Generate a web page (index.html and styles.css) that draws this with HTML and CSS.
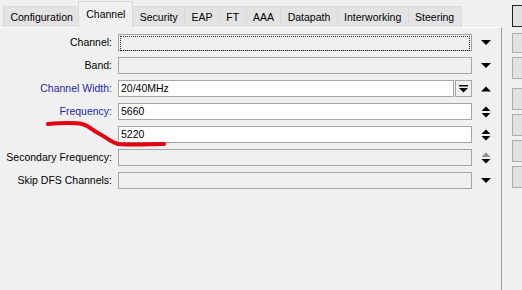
FILE: index.html
```html
<!DOCTYPE html>
<html>
<head>
<meta charset="utf-8">
<link rel="stylesheet" href="styles.css">
</head>
<body>
<div class="window">
  <div class="main">
    <div class="tabs">
      <div class="tab">Configuration</div>
      <div class="tab active">Channel</div>
      <div class="tab">Security</div>
      <div class="tab">EAP</div>
      <div class="tab">FT</div>
      <div class="tab">AAA</div>
      <div class="tab">Datapath</div>
      <div class="tab">Interworking</div>
      <div class="tab">Steering</div>
    </div>
    <div class="panel">
      <div class="form">
        <div class="label">Channel:</div>
        <div class="field disabled focus"><span class="dots"></span></div>
        <div class="icon"><svg width="10" height="6" viewBox="0 0 10 6"><path d="M0 0H10L5 5Z" fill="#000"/></svg></div>

        <div class="label">Band:</div>
        <div class="field disabled"></div>
        <div class="icon"><svg width="10" height="6" viewBox="0 0 10 6"><path d="M0 0H10L5 5Z" fill="#000"/></svg></div>

        <div class="label blue">Channel Width:</div>
        <div class="combo">
          <div class="field">20/40MHz</div>
          <div class="dropbtn"><svg width="9" height="8" viewBox="0 0 9 8"><rect x="0" y="0" width="9" height="1.5" fill="#000"/><path d="M0 3H9L4.5 7.5Z" fill="#000"/></svg></div>
        </div>
        <div class="icon"><svg width="10" height="6" viewBox="0 0 10 6"><path d="M0 5.5H10L5 0.5Z" fill="#000"/></svg></div>

        <div class="label blue">Frequency:</div>
        <div class="field">5660</div>
        <div class="icon"><svg width="10" height="12" viewBox="0 0 10 12"><path d="M0.5 5H9.5L5 0.5Z" fill="#000"/><path d="M0.5 7H9.5L5 11.5Z" fill="#000"/></svg></div>

        <div class="label"></div>
        <div class="field">5220</div>
        <div class="icon"><svg width="10" height="12" viewBox="0 0 10 12"><path d="M0.5 5H9.5L5 0.5Z" fill="#000"/><path d="M0.5 7H9.5L5 11.5Z" fill="#000"/></svg></div>

        <div class="label">Secondary Frequency:</div>
        <div class="field disabled"></div>
        <div class="icon"><svg width="10" height="12" viewBox="0 0 10 12"><path d="M0.5 5H9.5L5 0.5Z" fill="#8c8c8c"/><path d="M0.5 7H9.5L5 11.5Z" fill="#000"/></svg></div>

        <div class="label">Skip DFS Channels:</div>
        <div class="field disabled"></div>
        <div class="icon"><svg width="10" height="6" viewBox="0 0 10 6"><path d="M0 0H10L5 5Z" fill="#000"/></svg></div>
      </div>
      <svg class="scribble" width="180" height="40" viewBox="0 0 180 40"><path d="M48 13 C60 12 72 11 82 13 C90 15 92 19 98 22 C106 26 110 31 118 33 C130 34 150 33 164 33" fill="none" stroke="#e4000f" stroke-width="4" stroke-linecap="round" stroke-linejoin="round"/></svg>
    </div>
  </div>
  <div class="buttons">
    <div class="btn default"></div>
    <div class="btn b1"></div>
    <div class="btn b2"></div>
    <div class="btn"></div>
    <div class="btn"></div>
    <div class="btn"></div>
    <div class="btn"></div>
  </div>
</div>
</body>
</html>
```

FILE: styles.css
```css
html, body {
  margin: 0;
  padding: 0;
  background: #f0f0f0;
}
body {
  width: 522px;
  height: 290px;
  overflow: hidden;
  font-family: "Liberation Sans", Arial, sans-serif;
  font-size: 10.5px;
  color: #000;
}
.window {
  display: flex;
  height: 290px;
}
.main {
  width: 502px;
  flex: none;
  display: flex;
  flex-direction: column;
}
.tabs {
  display: flex;
  align-items: flex-end;
  height: 27px;
  padding-left: 3px;
  box-sizing: border-box;
  position: relative;
  z-index: 1;
}
.tab {
  height: 21px;
  line-height: 21px;
  padding: 0 6.4px;
  background: #e3e3e3;
  border: 1px solid #d9d9d9;
  border-bottom: none;
  margin-right: -1px;
  box-sizing: border-box;
}
.tab.active {
  height: 27px;
  line-height: 25px;
  background: #f0f0f0;
  border-color: #d9d9d9;
  margin-bottom: -1px;
  padding: 0 7px;
  margin-left: -1px;
  margin-right: -1px;
}
.panel {
  flex: 1;
  border-top: 1px solid #fff;
  border-right: 1px solid #a0a0a0;
  position: relative;
  padding-top: 6px;
}
.form {
  display: grid;
  grid-template-columns: 115px 357px 26px;
  grid-auto-rows: 17px;
  row-gap: 6px;
}
.label {
  text-align: right;
  line-height: 17px;
  padding-right: 3px;
  white-space: nowrap;
}
.label.blue {
  color: #1f1fa8;
}
.field {
  margin-left: 3px;
  height: 17px;
  box-sizing: border-box;
  border: 1px solid #a5a5a5;
  background: #fff;
  line-height: 15px;
  padding-left: 2px;
}
.field.disabled {
  background: #f0f0f0;
}
.field.focus {
  padding: 1px;
}
.dots {
  display: block;
  height: 13px;
  border: 1px dotted #222;
}
.combo {
  display: flex;
  gap: 1px;
}
.combo .field {
  flex: 1;
}
.dropbtn {
  width: 17px;
  height: 17px;
  box-sizing: border-box;
  border: 1px solid #a5a5a5;
  background: #f0f0f0;
  display: flex;
  align-items: center;
  justify-content: center;
}
.icon {
  display: flex;
  align-items: center;
  justify-content: center;
  padding-left: 1px;
}
.scribble {
  position: absolute;
  left: 0;
  top: 83px;
}
.buttons {
  flex: none;
  display: flex;
  flex-direction: column;
  padding-left: 10px;
  padding-top: 5px;
}
.btn {
  width: 20px;
  height: 22px;
  flex: none;
  box-sizing: border-box;
  border: 1px solid #adadad;
  background: #e1e1e1;
  margin-bottom: 4px;
}
.btn.default {
  border: 1px solid #222;
  margin-bottom: 6px;
}
.btn.b1 {
  height: 20px;
}
.btn.b2 {
  margin-bottom: 9px;
}
```
